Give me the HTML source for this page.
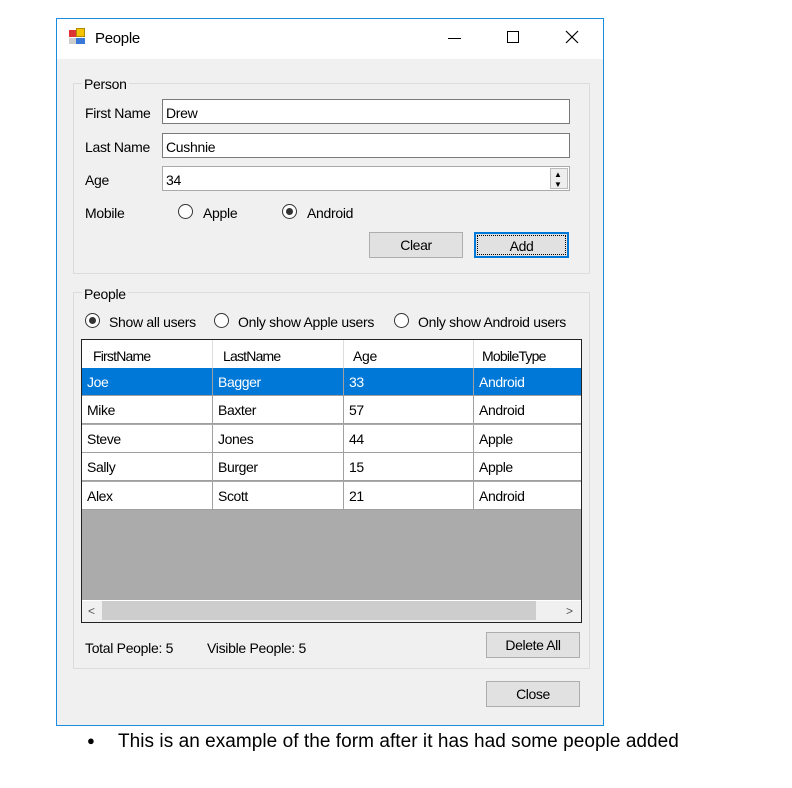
<!DOCTYPE html>
<html><head><style>
*{margin:0;padding:0;box-sizing:border-box}
body{width:792px;height:788px;background:#fff;position:relative;font-family:"Liberation Sans",sans-serif;font-size:14px;color:#000;overflow:hidden}
.a{position:absolute}
.t{position:absolute;white-space:nowrap;letter-spacing:-0.3px;line-height:16px}
.win{left:56px;top:18px;width:548px;height:708px;border:1px solid #1a8ce0;background:#f0f0f0}
.tb{left:57px;top:19px;width:546px;height:40px;background:#fff}
.grp{border:1px solid #dcdcdc}
.inp{background:#fff;border:1px solid #7a7a7a;height:25px}
.btn{background:#e1e1e1;border:1px solid #adadad;height:26px;text-align:center;line-height:24px;letter-spacing:-0.4px}
.rad{width:15px;height:15px;border:1px solid #333;border-radius:50%;background:#fff}
.rad.on::after{content:"";position:absolute;left:3px;top:3px;width:7px;height:7px;border-radius:50%;background:#333}
.cell{position:absolute;height:28px;border-right:1px solid #a0a0a0;border-bottom:1px solid #a0a0a0;background:#fff;line-height:28px;padding-left:5px;letter-spacing:-0.4px}
</style></head><body>
<div class="a win"></div>
<div class="a tb"></div>
<div class="a" style="left:69px;top:30px;width:7px;height:7px;background:#d33"></div>
<div class="a" style="left:76px;top:28px;width:9px;height:9px;background:#f5c400;border:1px solid #b08a00"></div>
<div class="a" style="left:69px;top:38px;width:7px;height:6px;background:#ccc"></div>
<div class="a" style="left:76px;top:38px;width:9px;height:6px;background:#3a78d8"></div>
<div class="t" style="left:95px;top:31px;font-size:15px">People</div>
<div class="a" style="left:448px;top:38px;width:13px;height:1px;background:#000"></div>
<div class="a" style="left:507px;top:31px;width:12px;height:12px;border:1px solid #000"></div>
<svg class="a" style="left:565px;top:30px" width="14" height="14"><path d="M1 1L13 13M13 1L1 13" stroke="#000" stroke-width="1.2"/></svg>

<div class="a grp" style="left:73px;top:83px;width:517px;height:191px"></div>
<div class="t" style="left:82px;top:76px;background:#f0f0f0;padding:0 2px">Person</div>
<div class="t" style="left:85px;top:105px">First Name</div>
<div class="t" style="left:85px;top:139px">Last Name</div>
<div class="t" style="left:85px;top:172px">Age</div>
<div class="t" style="left:85px;top:205px">Mobile</div>
<div class="a inp" style="left:162px;top:99px;width:408px"></div><div class="t" style="left:166px;top:105px">Drew</div>
<div class="a inp" style="left:162px;top:133px;width:408px"></div><div class="t" style="left:166px;top:139px">Cushnie</div>
<div class="a inp" style="left:162px;top:166px;width:408px;border-color:#aaa"></div><div class="t" style="left:166px;top:172px">34</div>
<div class="a" style="left:550px;top:168px;width:18px;height:21px;background:#eee;border:1px solid #bbb"></div>
<div class="t" style="left:554px;top:167px;font-size:8px">▲</div><div class="t" style="left:554px;top:177px;font-size:8px">▼</div>
<div class="a rad" style="left:178px;top:204px"></div><div class="t" style="left:203px;top:205px">Apple</div>
<div class="a rad on" style="left:282px;top:204px"></div><div class="t" style="left:307px;top:205px">Android</div>
<div class="a btn" style="left:369px;top:232px;width:94px">Clear</div>
<div class="a btn" style="left:474px;top:232px;width:95px;border:2px solid #0078d7;outline:1px dotted #000;outline-offset:-4px">Add</div>

<div class="a grp" style="left:73px;top:292px;width:517px;height:377px"></div>
<div class="t" style="left:82px;top:286px;background:#f0f0f0;padding:0 2px">People</div>
<div class="a rad on" style="left:85px;top:313px"></div><div class="t" style="left:109px;top:314px">Show all users</div>
<div class="a rad" style="left:214px;top:313px"></div><div class="t" style="left:238px;top:314px">Only show Apple users</div>
<div class="a rad" style="left:394px;top:313px"></div><div class="t" style="left:418px;top:314px">Only show Android users</div>

<div class="a" style="left:81px;top:339px;width:501px;height:284px;border:1px solid #222;background:#ababab"></div>
<div class="a" style="left:82px;top:340px;width:499px;height:28px;background:#fff"></div>
<div class="t" style="left:93px;top:348px;letter-spacing:-0.8px">FirstName</div>
<div class="t" style="left:223px;top:348px;letter-spacing:-0.8px">LastName</div>
<div class="t" style="left:353px;top:348px">Age</div>
<div class="t" style="left:482px;top:348px;letter-spacing:-0.8px">MobileType</div>
<div class="a" style="left:212px;top:340px;width:1px;height:28px;background:#ddd"></div>
<div class="a" style="left:343px;top:340px;width:1px;height:28px;background:#ddd"></div>
<div class="a" style="left:473px;top:340px;width:1px;height:28px;background:#ddd"></div>

<div class="cell" style="left:82px;top:368px;width:131px;background:#0078d7;color:#fff">Joe</div>
<div class="cell" style="left:213px;top:368px;width:131px;background:#0078d7;color:#fff">Bagger</div>
<div class="cell" style="left:344px;top:368px;width:130px;background:#0078d7;color:#fff">33</div>
<div class="cell" style="left:474px;top:368px;width:107px;background:#0078d7;color:#fff;border-right:0">Android</div>

<div class="cell" style="left:82px;top:396px;width:131px">Mike</div><div class="cell" style="left:213px;top:396px;width:131px">Baxter</div><div class="cell" style="left:344px;top:396px;width:130px">57</div><div class="cell" style="left:474px;top:396px;width:107px;border-right:0">Android</div>
<div class="cell" style="left:82px;top:425px;width:131px">Steve</div><div class="cell" style="left:213px;top:425px;width:131px">Jones</div><div class="cell" style="left:344px;top:425px;width:130px">44</div><div class="cell" style="left:474px;top:425px;width:107px;border-right:0">Apple</div>
<div class="cell" style="left:82px;top:453px;width:131px">Sally</div><div class="cell" style="left:213px;top:453px;width:131px">Burger</div><div class="cell" style="left:344px;top:453px;width:130px">15</div><div class="cell" style="left:474px;top:453px;width:107px;border-right:0">Apple</div>
<div class="cell" style="left:82px;top:482px;width:131px">Alex</div><div class="cell" style="left:213px;top:482px;width:131px">Scott</div><div class="cell" style="left:344px;top:482px;width:130px">21</div><div class="cell" style="left:474px;top:482px;width:107px;border-right:0">Android</div>

<div class="a" style="left:82px;top:600px;width:499px;height:22px;background:#f0f0f0;border-top:1px solid #fff"></div>
<div class="a" style="left:102px;top:601px;width:434px;height:19px;background:#cdcdcd"></div>
<div class="t" style="left:88px;top:603px;font-size:12px;color:#555">&lt;</div>
<div class="t" style="left:566px;top:603px;font-size:12px;color:#555">&gt;</div>

<div class="t" style="left:85px;top:640px">Total People: 5</div>
<div class="t" style="left:207px;top:640px">Visible People: 5</div>
<div class="a btn" style="left:486px;top:632px;width:94px">Delete All</div>
<div class="a btn" style="left:486px;top:681px;width:94px">Close</div>

<div class="t" style="left:87px;top:733px;font-size:13px">●</div>
<div class="t" style="left:118px;top:731px;font-size:19px;line-height:21px;letter-spacing:0.05px">This is an example of the form after it has had some people added</div>
</body></html>
